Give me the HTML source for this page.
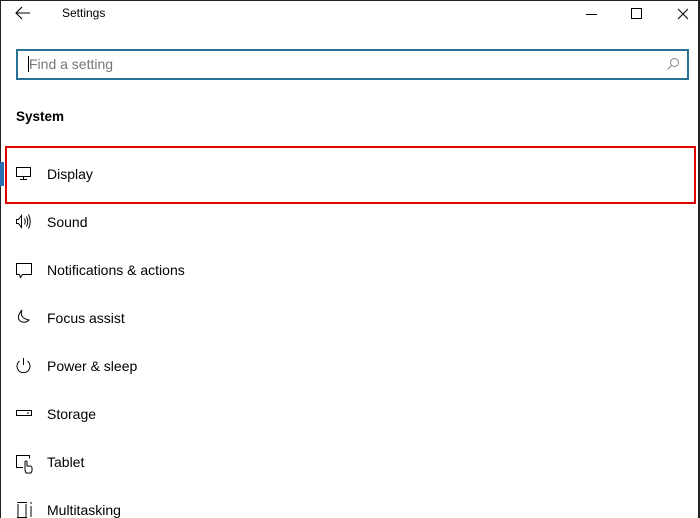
<!DOCTYPE html>
<html><head><style>
*{margin:0;padding:0;box-sizing:border-box}
body{width:700px;height:518px;overflow:hidden;background:#fff;font-family:"Liberation Sans",sans-serif;position:relative;color:#000}
.frame{position:absolute;left:0;top:0;width:700px;height:518px;border-left:1px solid #222;border-top:1px solid #222;border-right:2px solid #222}
.t{position:absolute;font-size:14px;white-space:nowrap}
svg{position:absolute;overflow:visible}
.it{position:absolute;left:47px;font-size:14px;line-height:16px;transform:translateY(-8px)}
</style></head><body>
<div class="frame"></div>
<svg style="left:15px;top:6px" width="16" height="14" viewBox="0 0 16 14"><path d="M1 7H15M7 1L1 7L7 13" stroke="#000" fill="none" stroke-width="1.1"/></svg>
<div class="t" style="left:62px;top:6px;font-size:12px">Settings</div>
<svg style="left:580px;top:6px" width="110" height="16"><path d="M6 8.5H17" stroke="#000"/><rect x="51.5" y="2.5" width="10" height="10" fill="none" stroke="#000"/><path d="M98 3L108 13M108 3L98 13" stroke="#000"/></svg>
<div style="position:absolute;left:16px;top:49px;width:673px;height:31px;border:2px solid #2a6f94"></div>
<div style="position:absolute;left:28px;top:56px;width:1px;height:16px;background:#000"></div>
<div class="t" style="left:29px;top:56px;color:#777">Find a setting</div>
<svg style="left:666px;top:57px" width="14" height="14"><circle cx="8.5" cy="5.5" r="4" fill="none" stroke="#888"/><path d="M5.5 8.5L1.5 12.5" stroke="#888"/></svg>
<div class="t" style="left:16px;top:109px;font-weight:bold;font-size:13.5px">System</div>
<div style="position:absolute;left:0;top:162px;width:4px;height:24px;background:#2a6fb4"></div>
<div style="position:absolute;left:5px;top:146px;width:691px;height:58px;border:2px solid #e00000"></div>
<svg style="left:14px;top:164px" width="20" height="240" fill="none" stroke="#000" stroke-width="1">
<rect x="2.5" y="3.5" width="14" height="9"/><path d="M9.5 12.5v3M6 15.5h7"/>
<path d="M2.5 55.5h2l3-4v12l-3-4h-2z M10.5 54.5q1.5 3 0 6 M12.5 52.5q2.5 5 0 10 M14.5 50.5q3.5 7 0 14"/>
<path d="M2.5 99.5h15v11h-9l-2 3-1-3h-3z"/>
<path d="M8 146q-3 8 7 10q-4 4-9 1q-4-4 2-11z"/>
<path d="M9.5 194v7 M5.5 197a6.5 6.5 0 1 0 8 0"/>
</svg>
<svg style="left:14px;top:400px" width="22" height="118" fill="none" stroke="#000" stroke-width="1">
<rect x="2.5" y="10.5" width="15" height="5"/><path d="M13 13h2"/>
<path d="M9 67.5h-6.5v-12h13v3 M11 70v-8a1 1 0 0 1 2 0v4h3a2 2 0 0 1 2 2v3l-1 2h-5z"/>
<path d="M3 102.5h10 M3 117.5h10 M4 104v13 M12 104v13 M17 102v2 M17 106v11"/>
</svg>
<div class="it" style="top:174px">Display</div>
<div class="it" style="top:222px">Sound</div>
<div class="it" style="top:270px">Notifications &amp; actions</div>
<div class="it" style="top:318px">Focus assist</div>
<div class="it" style="top:366px">Power &amp; sleep</div>
<div class="it" style="top:414px">Storage</div>
<div class="it" style="top:462px">Tablet</div>
<div class="it" style="top:510px">Multitasking</div>
</body></html>
